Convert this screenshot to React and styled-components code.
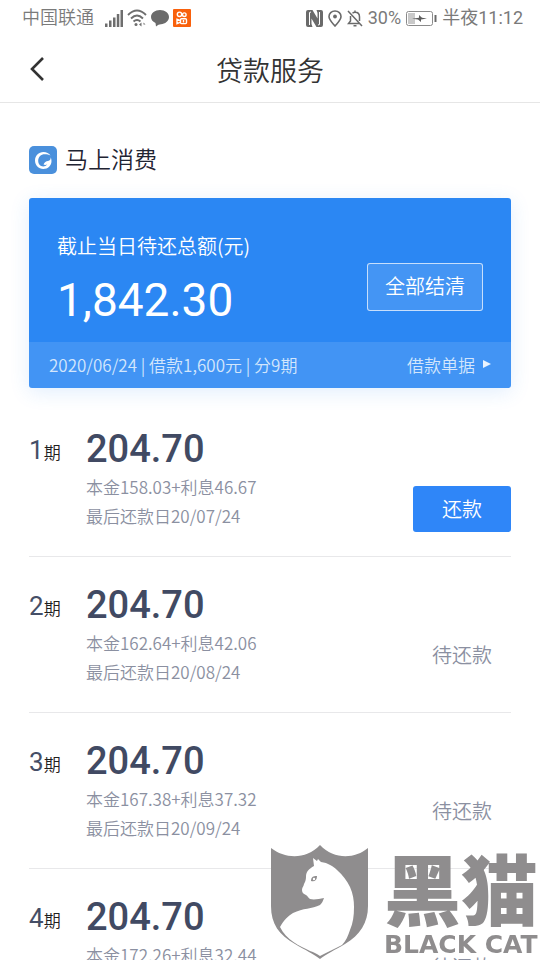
import React from 'react'
import styled, { createGlobalStyle } from 'styled-components'

const GlobalStyle = createGlobalStyle`
  * {
    box-sizing: border-box;
  }
  body {
    margin: 0;
    background: #fff;
    font-family: 'Noto Sans CJK SC', sans-serif;
    font-weight: 350;
  }
  button {
    font: inherit;
    cursor: pointer;
  }
`

const Screen = styled.div`
  display: flex;
  flex-direction: column;
  height: 100vh;
  overflow: hidden;
`
const StatusBar = styled.div`
  display: flex;
  flex: none;
  justify-content: space-between;
  height: 36px;
  padding: 0 17px 0 22px;
  color: #7a7a7a;
  font-family: Roboto, 'Noto Sans CJK SC', sans-serif;
  font-size: 18px;
  line-height: 38px;
  white-space: nowrap;
`
const StatusGroup = styled.div`
  display: flex;
  align-items: center;
  gap: ${(props) => props.$gap}px;
  & svg {
    flex: none;
  }
`
const Carrier = styled.span`
  margin-right: 7px;
`
const StatusValue = styled.span`
  font-weight: 400;
`
const NavBar = styled.header`
  display: grid;
  grid-template-columns: 76px 1fr 76px;
  align-items: center;
  flex: none;
  height: 67px;
  border-bottom: 1px solid #e6e6e6;
`
const BackButton = styled.button`
  display: flex;
  align-items: center;
  height: 48px;
  padding: 0 0 0 29px;
  border: 0;
  background: none;
`
const Title = styled.h1`
  margin: 0;
  padding-top: 2px;
  color: #333;
  font-size: 27px;
  font-weight: 350;
  line-height: 40px;
  text-align: center;
`
const Content = styled.main`
  flex: 1;
  min-height: 0;
  padding: 40px 29px 0;
  overflow-y: auto;
  scrollbar-width: none;
`
const Brand = styled.div`
  display: flex;
  align-items: center;
  gap: 8px;
  height: 34px;
  margin-bottom: 21px;
`
const BrandName = styled.h2`
  margin: 0;
  padding-bottom: 4px;
  color: #1f2433;
  font-size: 23px;
  font-weight: 350;
  line-height: 34px;
`
const Card = styled.section`
  border-radius: 3px;
  overflow: hidden;
  color: #fff;
  background: #2b87f3;
  box-shadow: 0 4px 20px rgba(43, 135, 243, 0.14);
`
const CardBody = styled.div`
  display: flex;
  align-items: center;
  justify-content: space-between;
  height: 144px;
  padding: 34px 28px 16px;
`
const CardLabel = styled.div`
  font-size: 20px;
  line-height: 30px;
`
const Total = styled.div`
  font-family: Roboto, sans-serif;
  font-size: 46px;
  font-weight: 400;
  line-height: 54px;
  margin-top: 12px;
`
const SettleButton = styled.button`
  width: 116px;
  height: 48px;
  margin-top: 16px;
  padding: 0 0 4px;
  border: 1px solid rgba(255, 255, 255, 0.7);
  border-radius: 3px;
  color: #fff;
  background: rgba(255, 255, 255, 0.12);
  && {
    font-size: 20px;
  }
`
const CardFooter = styled.div`
  display: flex;
  align-items: center;
  justify-content: space-between;
  height: 46px;
  padding: 0 20px 2px;
  color: #d3e6fc;
  background: rgba(255, 255, 255, 0.11);
  font-size: 17px;
`
const ReceiptLink = styled.a`
  display: flex;
  align-items: center;
  gap: 8px;
  color: inherit;
  text-decoration: none;
`
const PlanList = styled.ul`
  margin: 13px 0 0;
  padding: 0;
  list-style: none;
`
const PlanItem = styled.li`
  display: flex;
  align-items: flex-start;
  height: 156px;
  padding-top: 24px;
  border-bottom: 1px solid #e8e8ea;
`
const Period = styled.div`
  width: 57px;
  color: #1f2020;
  font-size: 17px;
  line-height: 50px;
`
const PeriodNumber = styled.span`
  color: #454e66;
  font-family: Roboto, sans-serif;
  font-size: 26px;
  font-weight: 400;
`
const PlanInfo = styled.div`
  flex: 1;
  color: #8b90a1;
  font-size: 17px;
  line-height: 29px;
`
const Amount = styled.div`
  padding-top: 2px;
  color: #414a63;
  font-family: Roboto, sans-serif;
  font-size: 38px;
  font-weight: 500;
  line-height: 45px;
`
const PayButton = styled.button`
  width: 98px;
  height: 46px;
  margin-top: 61px;
  padding: 0 0 2px;
  border: 0;
  border-radius: 3px;
  color: #fff;
  background: #2f86f8;
  && {
    font-size: 20px;
  }
`
const Pending = styled.span`
  margin-top: 51px;
  padding-right: 19px;
  color: #8b90a1;
  font-size: 20px;
  line-height: 46px;
`
const Watermark = styled.div`
  position: fixed;
  right: 0;
  bottom: 0;
  display: flex;
  align-items: flex-start;
  gap: 14px;
  color: #8f8d8e;
  pointer-events: none;
`
const WatermarkText = styled.div`
  width: 156px;
  white-space: nowrap;
`
const WatermarkName = styled.div`
  font-size: 77px;
  font-weight: 900;
  line-height: 84px;
`
const WatermarkLatin = styled.div`
  font-family: 'DejaVu Sans', sans-serif;
  font-size: 25px;
  font-weight: 700;
  line-height: 31px;
`

const SignalIcon = () => (
  <svg width="18" height="17" viewBox="0 0 18 17" fill="#6e6e6e">
    <path d="M0 13.500h2.500V17H0zM4 10.500h2.500V17H4zM8 7.500h2.500V17H8zM11.800 4h2.500v13h-2.500zM15.500 0H18v17h-2.500z" />
  </svg>
)

const WifiIcon = () => (
  <svg width="20" height="18" viewBox="0 0 20 18" fill="none" stroke="#6e6e6e" strokeWidth="1.900">
    <path d="M1 6Q10 -3 19 6M4 9.500Q10 3.500 16 9.500M6.500 12.500Q10 9.300 13.500 12.500" />
    <circle cx="9" cy="15.500" r="1.500" fill="#6e6e6e" stroke="none" />
    <path d="M12 15.500l2.500-2v4zM16.500 13.500l2 2h-2z" fill="#6e6e6e" stroke="none" />
  </svg>
)

const ChatIcon = () => (
  <svg width="18" height="17" viewBox="0 0 18 17" fill="#6b6b6b">
    <path d="M9 0c5 0 9 3 9 7s-4 7-8 7.300c-2 .2-3 .5-5 2.200L4.500 13C1.500 11.700 0 9.500 0 7c0-4 4-7 9-7z" />
  </svg>
)

const VideoAppIcon = () => (
  <svg width="18" height="18" viewBox="0 0 18 18">
    <rect width="18" height="18" rx="1" fill="#f9610c" />
    <g fill="none" stroke="#fff" strokeWidth="1.400">
      <circle cx="6.500" cy="5.300" r="2.200" />
      <circle cx="11.300" cy="5.700" r="1.800" />
      <rect x="7.500" y="9.800" width="6" height="4.800" rx="1" />
      <path d="M7 11.500l-3-1.300v4.400l3-1.300M10.500 11v2.500" />
    </g>
  </svg>
)

const NfcIcon = () => (
  <svg width="17" height="17" viewBox="0 0 17 17">
    <path
      d="M2 0h4.500l5 8.500V3L10.500 0H15q2 0 2 2v13q0 2-2 2h-4.500l-5-8.500V14l1 3H2q-2 0-2-2V2q0-2 2-2z"
      fill="#6a6a6a"
    />
    <path d="M3.500 15V2.500l1.500-.5M13.500 2v12.500l-1.500.5" fill="none" stroke="#fff" strokeWidth="1" />
  </svg>
)

const PinIcon = () => (
  <svg width="14" height="17" viewBox="0 0 14 17">
    <path
      d="M7 1c3.500 0 6 2.500 6 5.500C13 10 9.500 13 7 16 4.500 13 1 10 1 6.500 1 3.500 3.500 1 7 1z"
      fill="none"
      stroke="#6a6a6a"
      strokeWidth="1.600"
    />
    <circle cx="7" cy="6.500" r="1.900" fill="#6a6a6a" />
  </svg>
)

const MutedIcon = () => (
  <svg width="16" height="17" viewBox="0 0 16 17" fill="none" stroke="#6a6a6a" strokeWidth="1.500">
    <path d="M5.500 3.200C6.300 2.500 7 2.300 8 2.300c3 0 4.500 2 4.500 4.700v4M3.500 6v5L1.500 13.500h11M8 .500v2M6.500 15.700h3M1 1l14 15" />
  </svg>
)

const BatteryIcon = () => (
  <svg width="31" height="15" viewBox="0 0 31 15">
    <rect x=".5" y=".5" width="26" height="14" rx="2" fill="#fff" stroke="#8a8a8a" />
    <rect x="2" y="2" width="7" height="11" fill="#c9c9c9" />
    <path d="M6 7.700l7-1V4l3 2.700 5 .8-6 1V11l-3-2.500z" fill="#5d5d5d" />
    <path d="M28.500 4h2v7h-2z" fill="#6a6a6a" />
  </svg>
)

const BackIcon = () => (
  <svg width="18" height="26" viewBox="0 0 18 26" fill="none" stroke="#333" strokeWidth="2.600">
    <path d="M14 2L3 13l11 11" />
  </svg>
)

const BrandIcon = () => (
  <svg width="28" height="28" viewBox="0 0 28 28">
    <rect width="28" height="28" rx="5" fill="#4a90dc" />
    <path
      d="M21.500 9.500C20 7.300 17.500 6 14.500 6 9.500 6 6 9.700 6 14.500s3.500 8.500 8.300 8.500c4.700 0 8.200-3.300 8.200-8 0-1.500-.3-2.700-.8-3.700.2 2-.7 3.200-2.700 3.700-2 .4-3.500 1-4.500 3.500 1.200.7 2.500.6 3.700-.2-1 1.700-2.400 2.200-4 2.200-3 0-5-2.500-5-5.700 0-4 2.800-6.600 6.500-6.600 2.300 0 4.300.3 5.800 1.300z"
      fill="#fff"
    />
  </svg>
)

const ArrowIcon = () => (
  <svg width="8" height="8" viewBox="0 0 8 8" fill="#eaf3fe">
    <path d="M0 0l8 4-8 4z" />
  </svg>
)

const ShieldIcon = () => (
  <svg width="99" height="115" viewBox="0 0 99 115">
    <path
      d="M0 3C14 14 35 15 49 0c14 15 35 14 48 3v58c0 17-8 29-23 38-10 6-19 10-25 15-6-5-15-9-25-15C8 90 0 79 0 61z"
      fill="#8f8d8e"
    />
    <path
      d="M42 13l4 3 1-2 3 3c7 1 12 4 16 8 6 5 10 11 13 17 3 7 4 13 4 20 0 9-1 16-4 23-2 6-4 11-8 15-7 4-15 7-22 11-3-2-6-4-10-5C29 101 15 95 9 82c4-7 8-11 13-14 10-5 19-4 27-8 2-2 3-4 4-7-5 1-10 2-14 1-2-1-2-3-4-4-3-1-4-3-4-5 0-3 2-4 2-6 1-2 2-4 2-7 0-6 3-8 8-11z"
      fill="#fff"
    />
    <path d="M40 36c0-4 2-5 6-5 0 4-2 6-6 5z" fill="#8f8d8e" />
    <circle cx="43" cy="34" r="1.200" fill="#fff" />
  </svg>
)

const plans = [
  { period: 1, principal: '158.03', interest: '46.67', due: '20/07/24', payable: true },
  { period: 2, principal: '162.64', interest: '42.06', due: '20/08/24' },
  { period: 3, principal: '167.38', interest: '37.32', due: '20/09/24' },
  { period: 4, principal: '172.26', interest: '32.44', due: '20/10/24' },
]

const App = () => (
  <Screen>
    <GlobalStyle />
    <StatusBar>
      <StatusGroup $gap={4}>
        <Carrier>中国联通</Carrier>
        <SignalIcon />
        <WifiIcon />
        <ChatIcon />
        <VideoAppIcon />
      </StatusGroup>
      <StatusGroup $gap={5}>
        <NfcIcon />
        <PinIcon />
        <MutedIcon />
        <StatusValue>30%</StatusValue>
        <BatteryIcon />
        <StatusValue>半夜11:12</StatusValue>
      </StatusGroup>
    </StatusBar>
    <NavBar>
      <BackButton aria-label="返回">
        <BackIcon />
      </BackButton>
      <Title>贷款服务</Title>
    </NavBar>
    <Content>
      <Brand>
        <BrandIcon />
        <BrandName>马上消费</BrandName>
      </Brand>
      <Card>
        <CardBody>
          <div>
            <CardLabel>截止当日待还总额(元)</CardLabel>
            <Total>1,842.30</Total>
          </div>
          <SettleButton>全部结清</SettleButton>
        </CardBody>
        <CardFooter>
          <span>2020/06/24 | 借款1,600元 | 分9期</span>
          <ReceiptLink href="#receipt">
            借款单据
            <ArrowIcon />
          </ReceiptLink>
        </CardFooter>
      </Card>
      <PlanList>
        {plans.map((plan) => (
          <PlanItem key={plan.period}>
            <Period>
              <PeriodNumber>{plan.period}</PeriodNumber>期
            </Period>
            <PlanInfo>
              <Amount>204.70</Amount>
              <div>
                本金{plan.principal}+利息{plan.interest}
              </div>
              <div>最后还款日{plan.due}</div>
            </PlanInfo>
            {plan.payable ? <PayButton>还款</PayButton> : <Pending>待还款</Pending>}
          </PlanItem>
        ))}
      </PlanList>
    </Content>
    <Watermark>
      <ShieldIcon />
      <WatermarkText>
        <WatermarkName>黑猫</WatermarkName>
        <WatermarkLatin>BLACK CAT</WatermarkLatin>
      </WatermarkText>
    </Watermark>
  </Screen>
)

export default App
